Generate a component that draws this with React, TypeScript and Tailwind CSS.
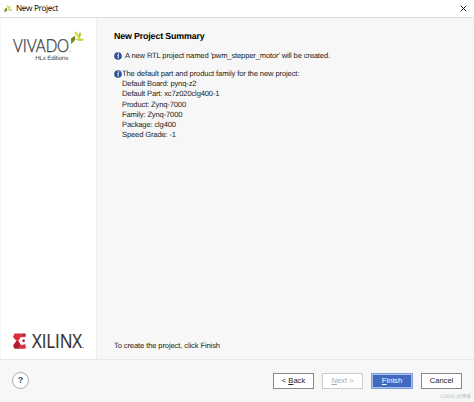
import React from "react";

const details = [
  "Default Board: pynq-z2",
  "Default Part: xc7z020clg400-1",
  "Product: Zynq-7000",
  "Family: Zynq-7000",
  "Package: clg400",
  "Speed Grade: -1",
];

function LeafShapes() {
  return (
    <>
      <path d="M1 8 L5.2 5.2 L5.8 9.5 L1.2 13.8 Z" fill="#6f8a18" />
      <path d="M4.2 0.2 Q9.6 1.2 10 7.8 Q5.6 5.8 4.2 0.2 Z" fill="#d3df45" />
      <path d="M10 7.8 Q8.2 4 11 1.2 Q12.6 4.4 10 7.8 Z" fill="#aebf25" />
      <path d="M6.2 8.8 Q11 6 15.2 9.6 Q10.5 12.4 6.2 8.8 Z" fill="#cbd93b" />
    </>
  );
}

function InfoIcon() {
  return (
    <svg viewBox="0 0 8 8" className="size-[8px] shrink-0">
      <circle cx="4" cy="4" r="3.8" fill="#2b5095" />
      <circle cx="4.4" cy="2" r="0.7" fill="#fff" />
      <path d="M3.2 3.5h1.3l-.6 2.5h.8" fill="none" stroke="#fff" strokeWidth="0.9" />
    </svg>
  );
}

function Sidebar() {
  return (
    <aside className="flex w-[95px] shrink-0 flex-col justify-between bg-white">
      <svg viewBox="0 0 95 50" className="h-[50px] w-[95px]" fontFamily="Lato, sans-serif">
        <text x="12" y="34.3" fontSize="18" fontWeight="300" fill="#454545" stroke="#454545" strokeWidth="0.4" textLength="56" lengthAdjust="spacingAndGlyphs">VIVADO</text>
        <circle cx="69" cy="33.8" r="0.5" fill="#777" />
        <text x="34.2" y="42.2" fontSize="6.2" fontFamily="Liberation Sans, sans-serif" fill="#444" textLength="33" lengthAdjust="spacingAndGlyphs">HLx Editions</text>
        <svg x="69" y="13" width="15" height="14" viewBox="0 0 16 15">
          <LeafShapes />
        </svg>
      </svg>
      <svg viewBox="0 0 95 36" className="h-[36px] w-[95px]" fontFamily="Open Sans, sans-serif">
        <path d="M13.5 10.5H20l3.8 4-4-.6-2.4 3.9h-2l-3.4-3.9z" fill="#dc2c38" />
        <path d="M20 10.5h4.6v3.8l-2.4-1.2z" fill="#b01f2e" />
        <path d="M15.4 17.8h2l2.4 3.9-1.4 4h-4.9l-1.5-3.3z" fill="#b01f2e" />
        <path d="M19.8 21.9l4.8-.7v4.5h-6.4z" fill="#dc2c38" />
        <path d="M21 17.8l1.1-1.2h1.6v2.4h-1.6z" fill="#a51e2c" />
        <text x="31" y="25" fontSize="19.5" fill="#333" stroke="#333" strokeWidth="0.2" textLength="50" lengthAdjust="spacingAndGlyphs">XILINX</text>
        <circle cx="82.3" cy="24.4" r="0.7" fill="#999" />
      </svg>
    </aside>
  );
}

export default function App() {
  return (
    <div className="flex h-[402px] w-[474px] flex-col overflow-hidden bg-[#f7f7f7] font-['Liberation_Sans',Arial,sans-serif] text-[7.6px] tracking-[-0.15px] text-[#1c1c1c] [text-rendering:geometricPrecision]">
      <header className="flex h-[18px] shrink-0 items-center justify-between border-b border-[#dedede] bg-white pr-[7px] pl-[4px]">
        <div className="flex items-center gap-[3px]">
          <svg viewBox="0 0 16 15" className="h-[10px] w-[9px]">
            <LeafShapes />
          </svg>
          <span className="pt-px font-['Open_Sans',sans-serif] text-[8.3px] leading-[16px] tracking-[-0.4px] whitespace-nowrap text-black">New Project</span>
        </div>
        <svg viewBox="0 0 7 7" className="size-[7px]">
          <path d="M.8.8l5.4 5.4M6.2.8L.8 6.2" stroke="#222" strokeWidth="1" />
        </svg>
      </header>
      <div className="flex h-[342px] shrink-0 border-b border-[#e7e7e7] pl-px">
        <Sidebar />
        <main className="flex grow flex-col border-l border-[#eee] pt-[12px] pl-[17px]">
          <h1 className="text-[8.9px] leading-[12px] font-bold tracking-[-0.17px] whitespace-nowrap text-black">New Project Summary</h1>
          <div className="mt-[9px] flex h-[10px] items-center gap-[3px]">
            <InfoIcon />
            <span className="whitespace-nowrap">A new RTL project named 'pwm_stepper_motor' will be created.</span>
          </div>
          <div className="mt-[8px] flex h-[10px] items-center">
            <InfoIcon />
            <span className="whitespace-nowrap tracking-[-0.12px]">The default part and product family for the new project:</span>
          </div>
          <ul className="pl-[8px]">
            {details.map((line) => (
              <li key={line} className="h-[10.3px] leading-[10.3px] whitespace-nowrap">{line}</li>
            ))}
          </ul>
          <p className="mt-auto mb-[7px] leading-[12px] tracking-[-0.12px]">To create the project, click Finish</p>
        </main>
      </div>
      <footer className="relative flex grow items-start pt-[12px] pr-[12px] pl-[12px]">
        <button className="flex size-[17px] items-center justify-center rounded-full border border-[#aaa] bg-white text-[9px] leading-none font-bold text-[#34506f]">?</button>
        <div className="ml-auto flex gap-[8px] pt-px tracking-normal">
          <button className="h-[16px] w-[41px] border border-[#888] bg-white">&lt; <u>B</u>ack</button>
          <button className="h-[16px] w-[41px] border border-[#ccc] bg-white text-[#aaa]"><u>N</u>ext &gt;</button>
          <button className="h-[16px] w-[42px] border border-[#7d9bd6] bg-[#4069bf] text-white outline-1 -outline-offset-2 outline-[#a9c0e8]"><u>F</u>inish</button>
          <button className="h-[16px] w-[41px] border border-[#888] bg-white">Cancel</button>
        </div>
        <span className="absolute right-[3px] bottom-[2px] font-['Liberation_Sans','Noto_Sans_CJK_SC',sans-serif] text-[5px] leading-[6px] tracking-normal whitespace-nowrap text-[#bbb]">CSDN @博客</span>
      </footer>
    </div>
  );
}
